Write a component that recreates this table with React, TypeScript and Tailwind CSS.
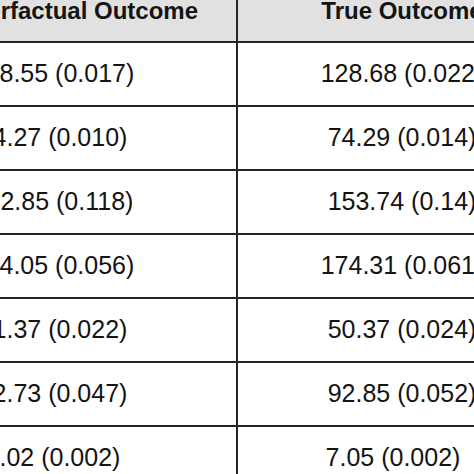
const rows: { cf: string; tr: string; trPad?: string }[] = [
  { cf: '128.55 (0.017)', tr: '128.68 (0.022)' },
  { cf: '74.27 (0.010)', tr: '74.29 (0.014)' },
  { cf: '152.85 (0.118)', tr: '153.74 (0.14)' },
  { cf: '174.05 (0.056)', tr: '174.31 (0.061)' },
  { cf: '51.37 (0.022)', tr: '50.37 (0.024)' },
  { cf: '92.73 (0.047)', tr: '92.85 (0.052)' },
  { cf: '7.02 (0.002)', tr: '7.05 (0.002)', trPad: 'pr-[18px]' },
];

export default function App() {
  return (
    <div className="h-[474px] w-[474px] overflow-hidden bg-white text-[#141414] [font-family:'Liberation_Sans',Arial,sans-serif]">
      {/* table is wider than the crop; shift it left so only part of the first column shows */}
      <div className="-ml-[125px] w-[722px]">
        <div className="flex h-[43px] border-b-2 border-[#262626] bg-[#e1e1e1]">
          <div className="flex w-[363px] shrink-0 justify-center border-r-2 border-[#262626] pl-[5px]">
            <span className="text-[24px] font-bold leading-[22px] whitespace-nowrap">Counterfactual Outcome</span>
          </div>
          <div className="flex w-[328px] shrink-0 justify-center">
            <span className="text-[24px] font-bold leading-[22px] whitespace-nowrap">True Outcome</span>
          </div>
        </div>
        {rows.map((r, i) => (
          <div key={i} className="flex h-[64px] border-b-2 border-[#262626]">
            <div className="flex w-[363px] shrink-0 items-center justify-center border-r-2 border-[#262626] pr-[5px]">
              <span className="text-[25px] whitespace-nowrap">{r.cf}</span>
            </div>
            <div className={`flex w-[328px] shrink-0 items-center justify-center ${r.trPad ?? ''}`}>
              <span className="text-[25px] whitespace-nowrap">{r.tr}</span>
            </div>
          </div>
        ))}
      </div>
    </div>
  );
}
